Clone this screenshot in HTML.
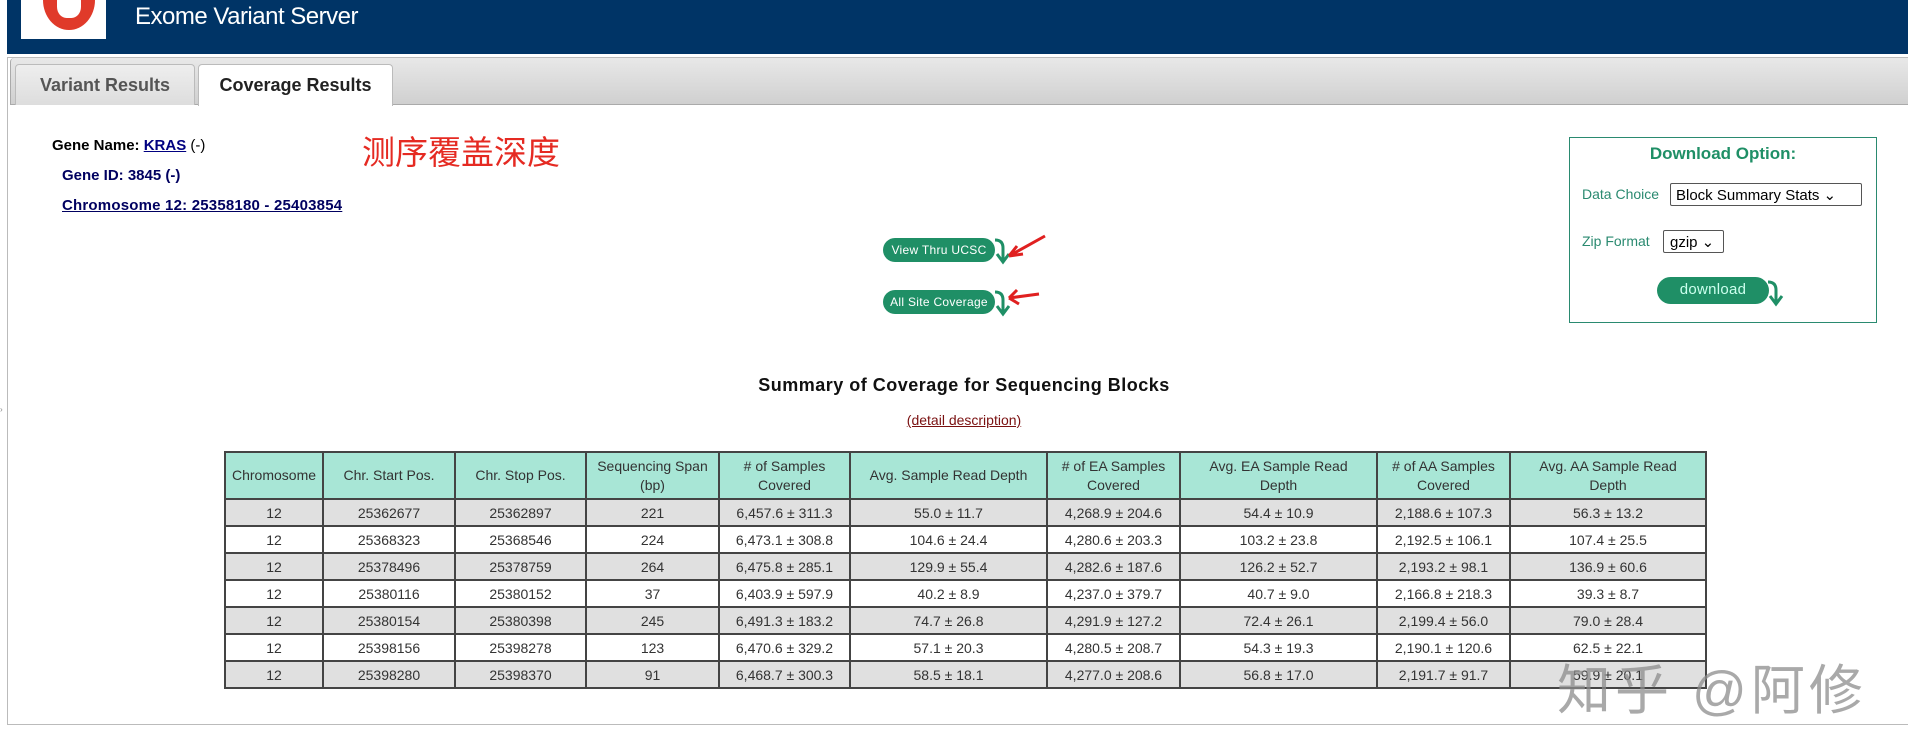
<!DOCTYPE html>
<html><head><meta charset="utf-8"><style>
*{box-sizing:border-box;margin:0;padding:0}
body{width:1908px;height:754px;background:#fff;position:relative;overflow:hidden;font-family:"Liberation Sans",Arial,sans-serif}
.abs{position:absolute}
#hdr{left:7px;top:0;width:1901px;height:54px;background:#003466}
#logo{left:21px;top:0;width:85px;height:39px;background:#fff;overflow:hidden}
#title{left:135px;top:3px;color:#fff;font-size:24px;letter-spacing:-0.5px}
#frame{left:7px;top:57px;width:1901px;height:668px;border-left:1px solid #bbb;border-bottom:1px solid #bbb;border-top:1px solid #bbb}
#tabbar{left:10px;top:58px;width:1898px;height:47px;background:linear-gradient(#e8e8e8,#d0d0d0);border-bottom:1px solid #aaa;border-left:1px solid #aaa;border-top-left-radius:4px}
.tab{top:64px;height:41px;font-weight:bold;font-size:18px;text-align:center;line-height:40px;border:1px solid #bbb;border-bottom:none;border-radius:4px 4px 0 0}
.lbl{font-size:15px;font-weight:bold;color:#000}
.btn{background:#1f8f66;color:#fff;border-radius:12px;font-size:12px;text-align:center;height:24px;line-height:24px;width:112px;letter-spacing:0.3px}
table{position:absolute;left:224px;top:451px;border-collapse:collapse;font-size:14px;color:#333}
td,th{border:2px solid #444;text-align:center;font-weight:normal;height:27px;padding:0}
th{background:#a8e6d6;height:47px;line-height:19px}
tr:nth-child(even) td{background:#e0e0e0}
</style></head><body>
<div class="abs" id="hdr"></div>
<div class="abs" id="logo"><div class="abs" style="left:22px;top:-30px;width:52px;height:60px;border-radius:50%;background:#e03a2a"></div><div class="abs" style="left:36px;top:-10px;width:24px;height:28px;border-radius:40%;background:#fff"></div></div>
<div class="abs" id="title">Exome Variant Server</div>
<div class="abs" id="frame"></div>
<div class="abs" id="tabbar"></div>
<div class="abs tab" style="left:15px;width:180px;background:linear-gradient(#eee,#ddd);color:#555">Variant Results</div>
<div class="abs tab" style="left:198px;width:195px;background:#fff;color:#222;height:42px">Coverage Results</div>
<div class="abs" style="left:0;top:405px;font-size:8px;color:#888">›</div>

<div class="abs lbl" style="left:52px;top:137px;font-weight:bold">Gene Name: <span style="color:#000080;text-decoration:underline">KRAS</span> <span style="font-weight:normal">(-)</span></div>
<div class="abs lbl" style="left:62px;top:167px;color:#000060">Gene ID: 3845 (-)</div>
<div class="abs lbl" style="left:62px;top:197px;color:#000060;text-decoration:underline;letter-spacing:0.2px">Chromosome 12: 25358180 - 25403854</div>
<div class="abs" style="left:362px;top:126px;font-size:33px;color:#e52a22;font-family:'Liberation Sans','Noto Sans CJK SC',sans-serif">测序覆盖深度</div>

<div class="abs btn" style="left:883px;top:238px">View Thru UCSC</div>
<svg class="abs" style="left:993px;top:232px" width="56" height="36"><path d="M2 8 Q10 8 10 16 L10 30 M4 22 L10 30 L16 22" stroke="#1f8f66" stroke-width="3" fill="none"/><path d="M16 24 L52 4 M16 24 L30 22 M16 24 L24 14" stroke="#e02020" stroke-width="3" fill="none"/></svg>
<div class="abs btn" style="left:883px;top:290px">All Site Coverage</div>
<svg class="abs" style="left:993px;top:284px" width="56" height="36"><path d="M2 8 Q10 8 10 16 L10 30 M4 22 L10 30 L16 22" stroke="#1f8f66" stroke-width="3" fill="none"/><path d="M16 14 L46 10 M16 14 L26 20 M16 14 L24 6" stroke="#e02020" stroke-width="3" fill="none"/></svg>

<div class="abs" style="left:1569px;top:137px;width:308px;height:186px;border:1px solid #2a8a70"></div>
<div class="abs" style="left:1569px;top:144px;width:308px;text-align:center;color:#1f8f66;font-weight:bold;font-size:17px">Download Option:</div>
<div class="abs" style="left:1582px;top:186px;color:#2a8a70;font-size:14px">Data Choice</div>
<div class="abs" style="left:1670px;top:183px;width:192px;height:23px;border:1px solid #555;border-radius:2px;font-size:15px;padding:2px 0 0 5px">Block Summary Stats ⌄</div>
<div class="abs" style="left:1582px;top:233px;color:#2a8a70;font-size:14px">Zip Format</div>
<div class="abs" style="left:1663px;top:230px;width:61px;height:23px;border:1px solid #555;border-radius:2px;font-size:15px;padding:2px 0 0 6px">gzip ⌄</div>
<div class="abs btn" style="left:1657px;top:277px;width:112px;height:27px;line-height:26px;border-radius:14px;font-size:15px;color:#cfe">download</div>
<svg class="abs" style="left:1766px;top:276px" width="24" height="32"><path d="M2 6 Q10 6 10 14 L10 28 M4 20 L10 28 L16 20" stroke="#1f8f66" stroke-width="3" fill="none"/></svg>

<div class="abs" style="left:0;width:1928px;top:375px;text-align:center;font-weight:bold;font-size:18px;color:#111;letter-spacing:0.5px">Summary of Coverage for Sequencing Blocks</div>
<div class="abs" style="left:0;width:1928px;top:412px;text-align:center;font-size:14px;color:#7a1010;text-decoration:underline">(detail description)</div>

<table>
<tr><th style="width:98px">Chromosome</th><th style="width:132px">Chr. Start Pos.</th><th style="width:131px">Chr. Stop Pos.</th><th style="width:133px">Sequencing Span<br>(bp)</th><th style="width:131px"># of Samples<br>Covered</th><th style="width:197px">Avg. Sample Read Depth</th><th style="width:133px"># of EA Samples<br>Covered</th><th style="width:197px">Avg. EA Sample Read<br>Depth</th><th style="width:133px"># of AA Samples<br>Covered</th><th style="width:196px">Avg. AA Sample Read<br>Depth</th></tr>
<tr><td>12</td><td>25362677</td><td>25362897</td><td>221</td><td>6,457.6 ± 311.3</td><td>55.0 ± 11.7</td><td>4,268.9 ± 204.6</td><td>54.4 ± 10.9</td><td>2,188.6 ± 107.3</td><td>56.3 ± 13.2</td></tr>
<tr><td>12</td><td>25368323</td><td>25368546</td><td>224</td><td>6,473.1 ± 308.8</td><td>104.6 ± 24.4</td><td>4,280.6 ± 203.3</td><td>103.2 ± 23.8</td><td>2,192.5 ± 106.1</td><td>107.4 ± 25.5</td></tr>
<tr><td>12</td><td>25378496</td><td>25378759</td><td>264</td><td>6,475.8 ± 285.1</td><td>129.9 ± 55.4</td><td>4,282.6 ± 187.6</td><td>126.2 ± 52.7</td><td>2,193.2 ± 98.1</td><td>136.9 ± 60.6</td></tr>
<tr><td>12</td><td>25380116</td><td>25380152</td><td>37</td><td>6,403.9 ± 597.9</td><td>40.2 ± 8.9</td><td>4,237.0 ± 379.7</td><td>40.7 ± 9.0</td><td>2,166.8 ± 218.3</td><td>39.3 ± 8.7</td></tr>
<tr><td>12</td><td>25380154</td><td>25380398</td><td>245</td><td>6,491.3 ± 183.2</td><td>74.7 ± 26.8</td><td>4,291.9 ± 127.2</td><td>72.4 ± 26.1</td><td>2,199.4 ± 56.0</td><td>79.0 ± 28.4</td></tr>
<tr><td>12</td><td>25398156</td><td>25398278</td><td>123</td><td>6,470.6 ± 329.2</td><td>57.1 ± 20.3</td><td>4,280.5 ± 208.7</td><td>54.3 ± 19.3</td><td>2,190.1 ± 120.6</td><td>62.5 ± 22.1</td></tr>
<tr><td>12</td><td>25398280</td><td>25398370</td><td>91</td><td>6,468.7 ± 300.3</td><td>58.5 ± 18.1</td><td>4,277.0 ± 208.6</td><td>56.8 ± 17.0</td><td>2,191.7 ± 91.7</td><td>59.9 ± 20.1</td></tr>
</table>
<div class="abs" style="left:1557px;top:646px;font-size:54px;color:rgba(140,140,140,0.75);font-family:'Liberation Sans','Noto Sans CJK SC',sans-serif;letter-spacing:4px">知乎 @阿修</div>
</body></html>
